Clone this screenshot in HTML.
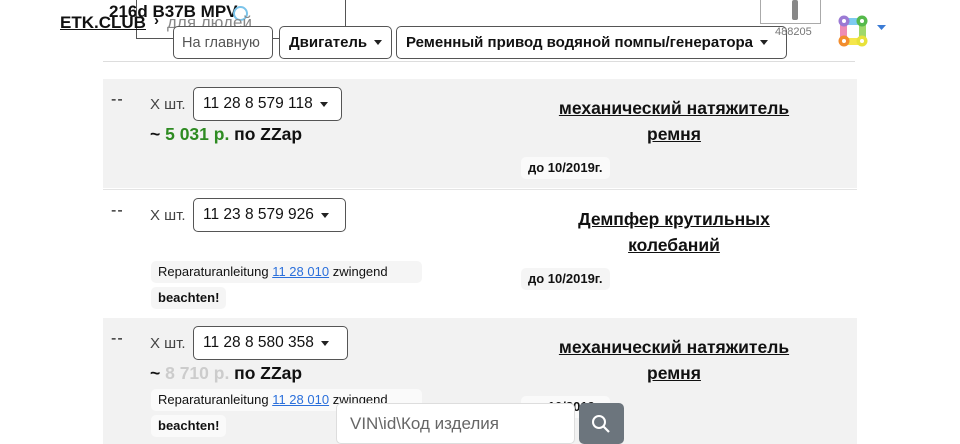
<!DOCTYPE html>
<html><head><meta charset="utf-8"><style>
*{box-sizing:border-box;margin:0;padding:0}
body{width:960px;height:444px;overflow:hidden;background:#fff;font-family:"Liberation Sans","DejaVu Sans",sans-serif;color:#111;position:relative}
.a{position:absolute;white-space:nowrap}
.btn{position:absolute;border:1px solid #555;border-radius:5px;height:33px;font-size:15px;display:flex;align-items:center;padding:0 9px;background:#fff;white-space:nowrap}
.car::after{content:"";display:inline-block;margin-left:7px;border-left:4px solid transparent;border-right:4px solid transparent;border-top:5px solid #222;vertical-align:middle}
.row{position:absolute;left:103px;width:754px}
.dash{font-size:16px;left:8px;letter-spacing:1px}
.x{font-size:15px;color:#444;left:47px}
.sel{left:90px;height:34px;font-size:15.5px}
.name{font-size:17.5px;font-weight:bold;text-decoration:underline;text-align:center;width:280px;left:431px;line-height:26px;white-space:normal}
.tag{position:absolute;background:#f5f5f5;border-radius:5px;font-size:13px;font-weight:bold;padding:3px 7px;height:22px;line-height:16px;white-space:nowrap}
.row.g .tag{background:#fafafa}
.note{font-size:13px}
.note a{color:#2a6fdb;text-decoration:underline}
</style></head><body>
<div class="a" style="left:109px;top:2px;font-size:17px;font-weight:bold">216d B37B MPV</div>
<div class="a" style="left:136px;top:-2px;width:210px;height:41px;border:1px solid #555;border-top:none"></div>
<div class="a" style="left:233px;top:6px;width:15px;height:15px;border:2px solid #7bc4ea;border-radius:50%"></div>
<div class="a" style="left:60px;top:13px;font-size:17px;font-weight:bold;text-decoration:underline">ETK.CLUB</div>
<div class="a" style="left:154px;top:12px;font-size:15px;font-weight:bold">›</div>
<div class="a" style="left:167px;top:13px;font-size:17px;color:#888">для людей</div>
<div class="btn" style="left:173px;top:26px;width:100px;color:#555;font-size:14.5px;padding:0 8px">На главную</div>
<div class="btn car" style="left:279px;top:26px;width:113px;font-weight:bold">Двигатель</div>
<div class="btn car" style="left:396px;top:26px;width:391px;font-weight:bold">Ременный привод водяной помпы/генератора</div>
<div class="a" style="left:760px;top:-2px;width:61px;height:26px;border:1px solid #aaa;border-top:none"></div>
<div class="a" style="left:792px;top:0;width:6px;height:20px;background:#888;border-radius:2px"></div>
<div class="a" style="left:775px;top:26px;font-size:11px;color:#777">488205</div>
<svg class="a" style="left:837px;top:14px" width="50" height="36" viewBox="0 0 50 36">
<rect x="7" y="4" width="18" height="7" fill="#7ecbf0"/><rect x="7" y="24" width="18" height="7" fill="#f5e64a"/>
<rect x="3" y="8" width="7" height="18" fill="#ee8bb5"/><rect x="22" y="8" width="7" height="18" fill="#9fd86a"/>
<circle cx="7" cy="7" r="5.5" fill="#9b7ad4"/><circle cx="25" cy="7" r="5.5" fill="#55b94b"/>
<circle cx="7" cy="27" r="5.5" fill="#f28d2e"/><circle cx="25" cy="27" r="5.5" fill="#e8e23a"/>
<circle cx="7" cy="7" r="2" fill="#fff"/><circle cx="25" cy="7" r="2" fill="#fff"/>
<circle cx="7" cy="27" r="2" fill="#fff"/><circle cx="25" cy="27" r="2" fill="#fff"/>
<path d="M40 11h9l-4.5 5z" fill="#3a7bd5"/></svg>
<div class="a" style="left:103px;top:61px;width:752px;height:1px;background:#ddd"></div>

<div class="row g" style="top:79px;height:109px;background:#f2f2f2">
<div class="a dash" style="top:12px">--</div>
<div class="a x" style="top:17px">Х шт.</div>
<div class="btn car sel" style="top:8px;width:149px">11 28 8 579 118</div>
<div class="a" style="left:47px;top:45px;font-size:17.5px;font-weight:bold">~ <span style="color:#2e8b22">5 031 р.</span> по ZZap</div>
<div class="a name" style="top:16px">механический натяжитель ремня</div>
<div class="tag" style="left:418px;top:78px">до 10/2019г.</div>
</div>

<div class="row" style="top:189px;height:128px;background:#fff;border-top:1px solid #e4e4e4">
<div class="a dash" style="top:12px">--</div>
<div class="a x" style="top:17px">Х шт.</div>
<div class="btn car sel" style="top:8px;width:153px">11 23 8 579 926</div>
<div class="a name" style="top:16px">Демпфер крутильных колебаний</div>
<div class="tag note" style="left:48px;top:71px;width:271px;font-weight:500">Reparaturanleitung <a>11 28 010</a> zwingend</div>
<div class="tag" style="left:48px;top:97px">beachten!</div>
<div class="tag" style="left:418px;top:78px">до 10/2019г.</div>
</div>

<div class="row g" style="top:318px;height:126px;background:#f2f2f2">
<div class="a dash" style="top:12px">--</div>
<div class="a x" style="top:17px">Х шт.</div>
<div class="btn car sel" style="top:8px;width:155px">11 28 8 580 358</div>
<div class="a" style="left:47px;top:45px;font-size:17.5px;font-weight:bold">~ <span style="color:#ccc">8 710 р.</span> по ZZap</div>
<div class="a name" style="top:16px">механический натяжитель ремня</div>
<div class="tag note" style="left:48px;top:71px;width:271px;font-weight:500">Reparaturanleitung <a>11 28 010</a> zwingend</div>
<div class="tag" style="left:48px;top:97px">beachten!</div>
<div class="tag" style="left:418px;top:78px">до 10/2019г.</div>
</div>

<div class="a" style="left:336px;top:403px;width:239px;height:41px;background:#fff;border:1px solid #ddd;border-radius:5px;font-size:17px;color:#666;padding:10px 13px">VIN\id\Код изделия</div>
<div class="a" style="left:579px;top:403px;width:45px;height:41px;background:#6c757d;border-radius:5px"></div>
<svg class="a" style="left:591px;top:414px" width="20" height="20" viewBox="0 0 20 20"><circle cx="8" cy="8" r="6" fill="none" stroke="#fff" stroke-width="2"/><path d="M12.5 12.5L18 18" stroke="#fff" stroke-width="2.2"/></svg>
</body></html>
